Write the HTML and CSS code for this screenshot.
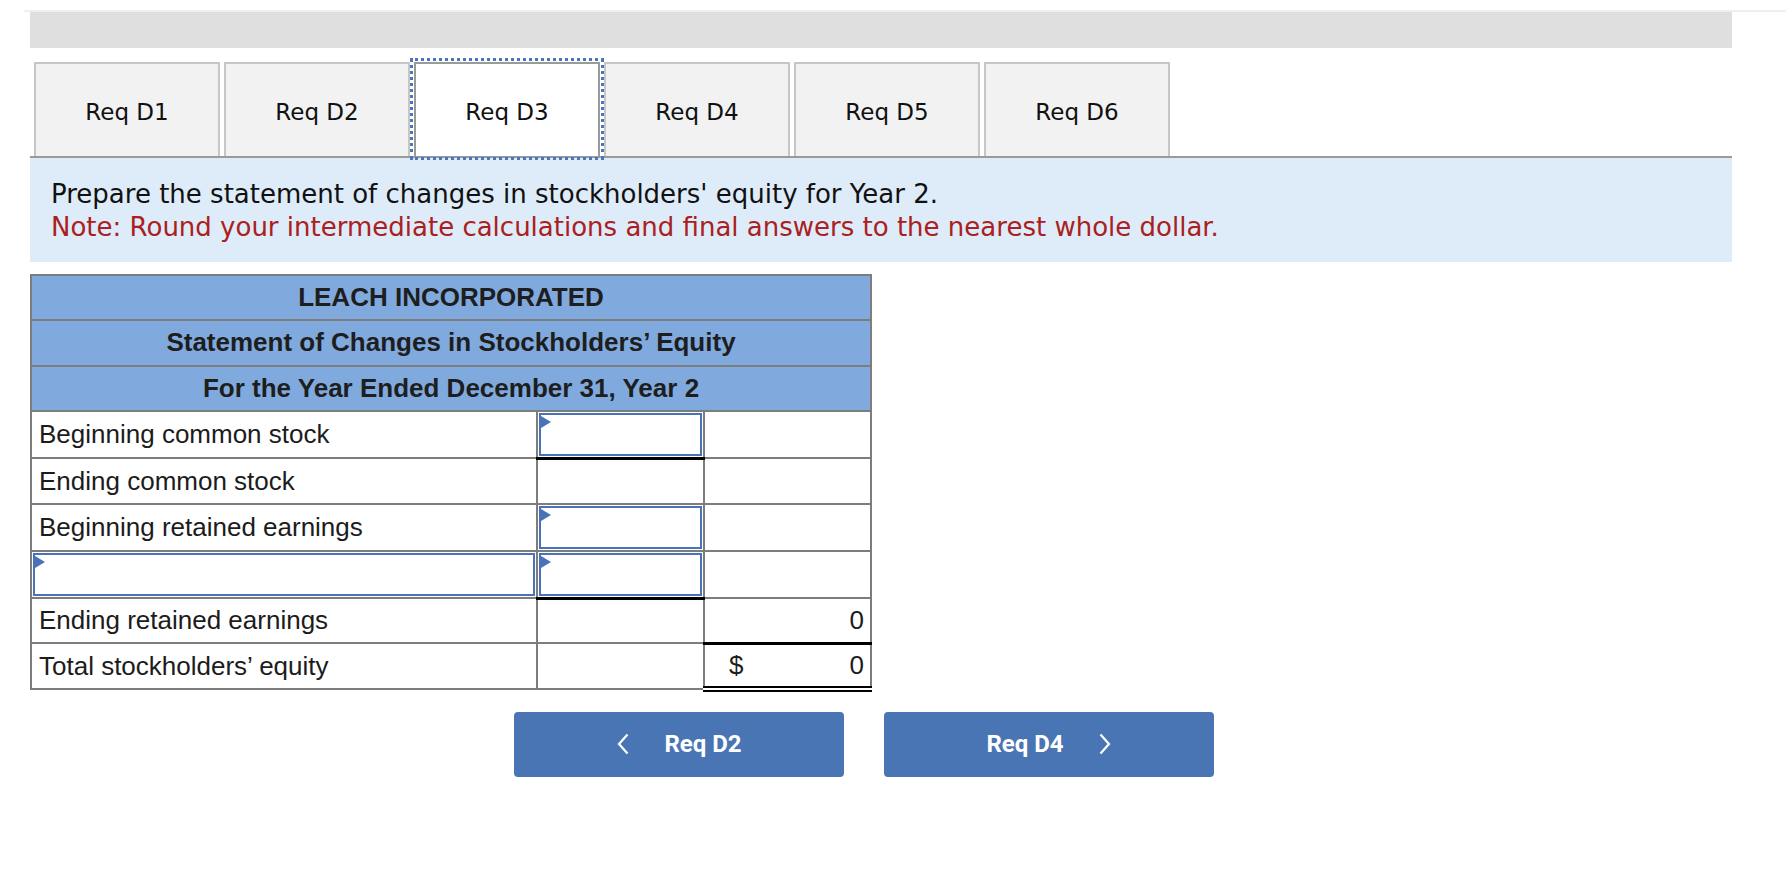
FILE: index.html
```html
<!DOCTYPE html>
<html lang="en">
<head>
<meta charset="utf-8">
<title>Req D3</title>
<link rel="stylesheet" href="styles.css">
</head>
<body>
<div class="topline"></div>
<div class="wrap">
  <div class="graybar"></div>
  <div class="tabs">
    <button class="tab">Req D1</button>
    <button class="tab">Req D2</button>
    <button class="tab active">Req D3</button>
    <button class="tab">Req D4</button>
    <button class="tab">Req D5</button>
    <button class="tab">Req D6</button>
  </div>
  <div class="prompt">
    <p class="q">Prepare the statement of changes in stockholders' equity for Year 2.</p>
    <p class="note">Note: Round your intermediate calculations and final answers to the nearest whole dollar.</p>
  </div>
  <table class="stmt">
    <colgroup><col class="c1"><col class="c2"><col class="c3"></colgroup>
    <tr><th colspan="3">LEACH INCORPORATED</th></tr>
    <tr><th colspan="3">Statement of Changes in Stockholders’ Equity</th></tr>
    <tr><th colspan="3">For the Year Ended December 31, Year 2</th></tr>
    <tr>
      <td class="lbl">Beginning common stock</td>
      <td class="under"><span class="field"><input type="text"></span></td>
      <td></td>
    </tr>
    <tr>
      <td class="lbl">Ending common stock</td>
      <td></td>
      <td></td>
    </tr>
    <tr>
      <td class="lbl">Beginning retained earnings</td>
      <td><span class="field"><input type="text"></span></td>
      <td></td>
    </tr>
    <tr>
      <td><span class="field"><input type="text"></span></td>
      <td class="under"><span class="field"><input type="text"></span></td>
      <td></td>
    </tr>
    <tr>
      <td class="lbl">Ending retained earnings</td>
      <td></td>
      <td class="num">0</td>
    </tr>
    <tr>
      <td class="lbl">Total stockholders’ equity</td>
      <td></td>
      <td class="total"><span class="cur">$</span><span class="amt">0</span></td>
    </tr>
  </table>
  <div class="nav">
    <button class="navbtn"><svg width="14" height="22" viewBox="0 0 14 22"><polyline points="11.5,1.5 3,11 11.5,20.5" fill="none" stroke="#fff" stroke-width="2.2"/></svg><span>Req D2</span></button>
    <button class="navbtn"><span>Req D4</span><svg width="14" height="22" viewBox="0 0 14 22"><polyline points="2.5,1.5 11,11 2.5,20.5" fill="none" stroke="#fff" stroke-width="2.2"/></svg></button>
  </div>
</div>
</body>
</html>
```

FILE: styles.css
```css
body {
  margin: 0;
  background: #fff;
  font-family: "DejaVu Sans", Verdana, sans-serif;
  color: #111;
}
.topline {
  margin: 10px 0 0 24px;
  height: 2px;
  background: #efefef;
}
.wrap {
  width: 1702px;
  margin-left: 30px;
}
.graybar {
  height: 36px;
  background: #dfdfdf;
}
.tabs {
  display: flex;
  align-items: flex-end;
  gap: 4px;
  padding-left: 4px;
  margin-top: 14px;
  border-bottom: 2px solid #9a9a9a;
}
.tab {
  width: 186px;
  height: 94px;
  box-sizing: border-box;
  border: 2px solid #c6c6c6;
  border-bottom: none;
  background: #f2f2f2;
  font-family: "DejaVu Sans", Verdana, sans-serif;
  font-size: 23px;
  color: #111;
  padding: 4px 0 0;
  margin: 0;
}
.tab.active {
  background: #fff;
  border-color: #9a9a9a;
  outline: 3px dotted #4a76c0;
  outline-offset: 1px;
}
.prompt {
  background: #deebf8;
  padding: 20px 21px 18px;
  font-size: 26px;
  line-height: 33px;
}
.prompt p {
  margin: 0;
}
.prompt .q {
  color: #111;
}
.prompt .note {
  color: #aa2020;
}
.stmt {
  border-collapse: collapse;
  table-layout: fixed;
  width: 842px;
  margin-top: 12px;
  font-family: "Liberation Sans", Arial, sans-serif;
  font-size: 26px;
  color: #1c1c1c;
}
.c1 { width: 506px; }
.c2 { width: 167px; }
.c3 { width: 167px; }
.stmt th,
.stmt td {
  border: 2px solid #7d7d7d;
  height: 45.3px;
  padding: 0;
  box-sizing: border-box;
}
.stmt th {
  background: #80aade;
  font-weight: bold;
  text-align: center;
  color: #1e1e1e;
}
.stmt td.lbl {
  padding-left: 7px;
}
.stmt td.num {
  text-align: right;
  padding-right: 6px;
}
.stmt td.under {
  border-bottom: 3px solid #000;
}
.stmt td.total {
  border-top: 3px solid #000;
  border-bottom: 6px double #000;
  padding: 0 6px 0 24px;
}
.total .cur {
  float: left;
}
.total .amt {
  float: right;
}
.field {
  display: block;
  position: relative;
  margin: 1px;
  height: 43px;
  box-sizing: border-box;
  border: 2px solid #4a72b8;
  background: #fff;
}
.field::before {
  content: "";
  position: absolute;
  left: 0;
  top: 1px;
  border-left: 10px solid #4a72b8;
  border-top: 6px solid transparent;
  border-bottom: 6px solid transparent;
}
.field input {
  display: block;
  width: 100%;
  height: 100%;
  border: none;
  background: transparent;
  padding: 0 6px;
  box-sizing: border-box;
  font: inherit;
  outline: none;
}
.nav {
  display: flex;
  gap: 40px;
  padding-left: 484px;
  margin-top: 20px;
}
.navbtn {
  width: 330px;
  height: 65px;
  background: #4a75b4;
  border: none;
  border-radius: 4px;
  color: #fff;
  font-family: Roboto, "Liberation Sans", sans-serif;
  font-weight: 700;
  font-size: 24px;
  display: flex;
  align-items: center;
  justify-content: center;
  gap: 34px;
  padding: 0;
}
```
